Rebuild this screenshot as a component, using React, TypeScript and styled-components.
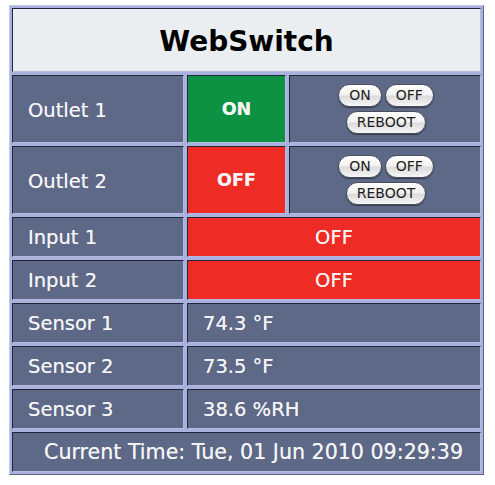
import React from 'react';
import styled, { createGlobalStyle, css } from 'styled-components';

const GlobalStyle = createGlobalStyle`
	html, body {
		margin: 0;
		padding: 0;
		background: #ffffff;
	}
	body {
		font-family: 'DejaVu Sans', Verdana, sans-serif;
	}
`;

const outlets = [
	{ name: 'Outlet 1', on: true },
	{ name: 'Outlet 2', on: false },
];

const inputs = [
	{ name: 'Input 1', on: false },
	{ name: 'Input 2', on: false },
];

const sensors = [
	{ name: 'Sensor 1', value: '74.3 °F' },
	{ name: 'Sensor 2', value: '73.5 °F' },
	{ name: 'Sensor 3', value: '38.6 %RH' },
];

function App() {
	return (
		<>
			<GlobalStyle />
			<Panel>
				<Title>WebSwitch</Title>
				{outlets.map((outlet) => (
					<React.Fragment key={outlet.name}>
						<Label $tall>{outlet.name}</Label>
						<Status $on={outlet.on} $bold>
							{outlet.on ? 'ON' : 'OFF'}
						</Status>
						<Controls>
							<ButtonRow>
								<PillButton>ON</PillButton>
								<PillButton>OFF</PillButton>
							</ButtonRow>
							<ButtonRow>
								<PillButton>REBOOT</PillButton>
							</ButtonRow>
						</Controls>
					</React.Fragment>
				))}
				{inputs.map((input) => (
					<React.Fragment key={input.name}>
						<Label>{input.name}</Label>
						<Status $on={input.on} $wide>
							{input.on ? 'ON' : 'OFF'}
						</Status>
					</React.Fragment>
				))}
				{sensors.map((sensor) => (
					<React.Fragment key={sensor.name}>
						<Label>{sensor.name}</Label>
						<Value>{sensor.value}</Value>
					</React.Fragment>
				))}
				<Footer>Current Time: Tue, 01 Jun 2010 09:29:39</Footer>
			</Panel>
		</>
	);
}

const Panel = styled.div`
	box-sizing: border-box;
	width: 475px;
	margin: 5px 0 0 9px;
	padding: 2px;
	display: grid;
	grid-template-columns: 172px 99px 1fr;
	grid-auto-rows: 40px;
	grid-template-rows: 64px 68px 68px;
	gap: 3px;
	background: #a9b1dc;
	border-top: 1px solid #c3c9ec;
	border-left: 1px solid #c3c9ec;
	border-right: 1px solid #5e6384;
	border-bottom: 1px solid #5e6384;
`;

const cellBase = css`
	box-sizing: border-box;
	display: flex;
	align-items: center;
	border-top: 1px solid #20253a;
	border-left: 1px solid #20253a;
	border-right: 1px solid #b3bbe3;
	border-bottom: 1px solid #b3bbe3;
	color: #f4f4f6;
	font-size: 19.5px;
	text-shadow: 0 0 0.4px rgba(255, 255, 255, 0.8);
`;

const Title = styled.div`
	${cellBase};
	grid-column: 1 / -1;
	justify-content: center;
	background: #ebeef0;
	color: #000000;
	font-size: 28px;
	font-weight: bold;
	padding-top: 2px;
	text-shadow: none;
`;

const Label = styled.div<{ $tall?: boolean }>`
	${cellBase};
	background: #5e6987;
	padding-left: 15px;
	padding-top: ${(p) => (p.$tall ? '2px' : '0')};
`;

const Status = styled.div<{ $on: boolean; $wide?: boolean; $bold?: boolean }>`
	${cellBase};
	justify-content: center;
	background: ${(p) => (p.$on ? '#0c9242' : '#ee2b24')};
	grid-column: ${(p) => (p.$wide ? 'span 2' : 'auto')};
	font-weight: ${(p) => (p.$bold ? 'bold' : 'normal')};
	font-size: ${(p) => (p.$bold ? '17.5px' : '19.5px')};
`;

const Value = styled.div`
	${cellBase};
	grid-column: span 2;
	background: #5e6987;
	padding-left: 15px;
`;

const Controls = styled.div`
	${cellBase};
	background: #5e6987;
	flex-direction: column;
	justify-content: center;
	gap: 4px;
	padding-left: 2px;
`;

const ButtonRow = styled.div`
	display: flex;
	gap: 3px;
`;

const PillButton = styled.button`
	box-sizing: border-box;
	height: 23px;
	padding: 0 10px;
	border: 1px solid #4a4d5c;
	border-radius: 12px;
	background: linear-gradient(
		to bottom,
		#ffffff 0%,
		#f2f2f2 45%,
		#dcdcdc 55%,
		#f6f6f6 100%
	);
	box-shadow: 0 1px 1px rgba(0, 0, 0, 0.45), inset 0 1px 0 #ffffff;
	color: #1c1c1c;
	font-family: 'DejaVu Sans', Verdana, sans-serif;
	font-size: 14px;
	line-height: 21px;
	cursor: pointer;
`;

const Footer = styled.div`
	${cellBase};
	grid-column: 1 / -1;
	justify-content: center;
	background: #5e6987;
	font-size: 20.6px;
	padding-left: 14px;
`;

export default App;
